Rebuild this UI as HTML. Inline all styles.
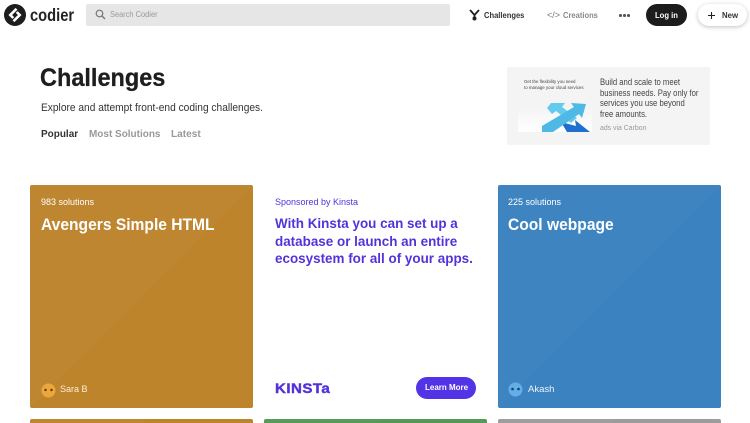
<!DOCTYPE html>
<html lang="en"><head><meta charset="utf-8"><title>Codier</title>
<style>
html,body{margin:0;padding:0;width:750px;height:423px;overflow:hidden;background:#fff}
body{font-family:"Liberation Sans",sans-serif;color:#1c1c1c}
#w{position:relative;width:750px;height:423px;overflow:hidden;filter:blur(.35px)}
.t{position:absolute;white-space:nowrap;line-height:1;transform-origin:left top}
.card{position:absolute;border-radius:2px;overflow:hidden}
.card:after{content:"";position:absolute;inset:0;background:linear-gradient(135deg,rgba(255,255,255,.02) 0%,rgba(255,255,255,.02) 50%,rgba(0,0,0,0) 50%)}
.ct{color:#fff}
svg{position:absolute}
</style></head><body><div id="w">

<svg style="left:3.5px;top:4px" width="22" height="22" viewBox="0 0 22 22"><circle cx="11" cy="11" r="11" fill="#1d1d1d"/><path d="M12.5 4.8 L6.3 11 L9.3 14 M9.5 17.2 L15.7 11 L12.7 8" fill="none" stroke="#fff" stroke-width="2.6"/></svg>
<div class="t" style="left:30px;top:6.5px;font-size:17.5px;font-weight:700;color:#222;transform:scaleX(.84)">codier</div>

<div style="position:absolute;left:86px;top:4px;width:364px;height:22px;background:#e6e6e6;border-radius:2px"></div>
<svg style="left:95px;top:9px" width="11" height="11" viewBox="0 0 11 11"><circle cx="4.5" cy="4.5" r="3.3" fill="none" stroke="#777" stroke-width="1.2"/><path d="M7 7l3 3" stroke="#777" stroke-width="1.3"/></svg>
<div class="t" style="left:110px;top:11px;font-size:8px;color:#999;transform:scaleX(.93)">Search Codier</div>

<svg style="left:469px;top:9px" width="11" height="12" viewBox="0 0 11 12"><path d="M1 1 L5.5 6 L10 1" fill="none" stroke="#222" stroke-width="1.8"/><path d="M5.5 5v3" stroke="#222" stroke-width="1.8"/><circle cx="5.5" cy="9.5" r="2" fill="#222"/></svg>
<div class="t" style="left:484px;top:11px;font-size:8.5px;font-weight:700;color:#333;transform:scaleX(.89)">Challenges</div>
<div class="t" style="left:547px;top:11px;font-size:9px;color:#777">&lt;/&gt;</div>
<div class="t" style="left:563px;top:11px;font-size:8.5px;font-weight:700;color:#888;transform:scaleX(.89)">Creations</div>
<div style="position:absolute;left:619px;top:14px;width:2.5px;height:2.5px;border-radius:50%;background:#555;box-shadow:4px 0 #555,8px 0 #555"></div>
<div style="position:absolute;left:646px;top:4px;width:41px;height:22px;border-radius:11px;background:#1c1c1c"></div>
<div class="t" style="left:655px;top:10.5px;font-size:8.5px;font-weight:700;color:#fff;transform:scaleX(.9)">Log in</div>
<div style="position:absolute;left:698px;top:4px;width:49px;height:22px;border-radius:11px;background:#fff;box-shadow:0 1px 4px rgba(0,0,0,.25)"></div>
<svg style="left:707px;top:11px" width="9" height="9" viewBox="0 0 9 9"><path d="M4.5 1v7M1 4.5h7" stroke="#222" stroke-width="1.1"/></svg>
<div class="t" style="left:722px;top:10.5px;font-size:8.5px;font-weight:700;color:#333;transform:scaleX(.92)">New</div>

<div class="t" style="left:40px;top:66px;font-size:25px;font-weight:700;color:#1e1e1e;-webkit-text-stroke:.3px #1e1e1e;transform:scaleX(.94)">Challenges</div>
<div class="t" style="left:41px;top:102.5px;font-size:11px;color:#333;transform:scaleX(.926)">Explore and attempt front-end coding challenges.</div>
<div class="t" style="left:41px;top:128.5px;font-size:10.5px;font-weight:700;color:#333;transform:scaleX(.95)">Popular</div>
<div class="t" style="left:89px;top:128.5px;font-size:10.5px;font-weight:700;color:#999;transform:scaleX(.95)">Most Solutions</div>
<div class="t" style="left:171px;top:128.5px;font-size:10.5px;font-weight:700;color:#999;transform:scaleX(.96)">Latest</div>

<div style="position:absolute;left:507px;top:67px;width:203px;height:78px;background:#f4f4f4;border-radius:2px"></div>
<div style="position:absolute;left:518px;top:75px;width:74px;height:57px;background:linear-gradient(180deg,#f4f4f4 55%,#fff)"></div>
<div class="t" style="left:524px;top:79px;font-size:4.4px;line-height:6px;color:#444">Get the flexibility you need<br>to manage your cloud services</div>
<svg style="left:541px;top:100px" width="50" height="33" viewBox="0 0 50 33"><path d="M20 22 L35 26 L34 20 L49 32 H26 Z" fill="#1f6fd0"/><path d="M6 8 L10 3 L24 3 L21 7 L36 18 L30 23 L15 11 L11 14 Z" fill="#63cbee"/><path d="M1 32 H12 L38 14 L41 18 L45 4 L30 3 L33 7 L1 26 Z" fill="#4db9e4"/></svg>
<div class="t" style="left:600px;top:77px;font-size:8.8px;line-height:10.7px;color:#444;transform:scaleX(.875)">Build and scale to meet<br>business needs. Pay only for<br>services you use beyond<br>free amounts.</div>
<div class="t" style="left:600px;top:124px;font-size:7.5px;color:#999;transform:scaleX(.92)">ads via Carbon</div>

<div class="card" style="left:30px;top:185px;width:223px;height:223px;background:#bd842c"></div>
<div class="t ct" style="left:41px;top:198px;font-size:9px">983 solutions</div>
<div class="t ct" style="left:41px;top:217px;font-size:16.5px;font-weight:700;transform:scaleX(.945)">Avengers Simple HTML</div>
<svg style="left:41px;top:383px" width="15" height="15" viewBox="0 0 15 15"><circle cx="7.5" cy="7.5" r="7" fill="#eda63c"/><circle cx="4.5" cy="7" r="1.2" fill="#53391a"/><circle cx="10.5" cy="7" r="1.2" fill="#53391a"/></svg>
<div class="t" style="left:60px;top:385px;font-size:9px;color:#fbeed8">Sara B</div>

<div class="t" style="left:275px;top:198px;font-size:9px;color:#5333d9">Sponsored by Kinsta</div>
<div class="t" style="left:275px;top:216px;font-size:14.2px;line-height:17.5px;font-weight:700;color:#5333d9;transform:scaleX(.947)">With Kinsta you can set up a<br>database or launch an entire<br>ecosystem for all of your apps.</div>
<div class="t" style="left:275px;top:381px;font-size:14px;font-weight:700;color:#5333d9;-webkit-text-stroke:.4px #5333d9;letter-spacing:.4px;transform:scaleX(1.08)">KINSTa</div>
<div style="position:absolute;left:416px;top:377px;width:60px;height:22px;border-radius:11px;background:#5333e6"></div>
<div class="t" style="left:425px;top:384px;font-size:8px;font-weight:700;color:#fff">Learn More</div>

<div class="card" style="left:498px;top:185px;width:223px;height:223px;background:#3a82c0"></div>
<div class="t ct" style="left:508px;top:198px;font-size:9px">225 solutions</div>
<div class="t ct" style="left:508px;top:217px;font-size:16.5px;font-weight:700;transform:scaleX(.945)">Cool webpage</div>
<svg style="left:508px;top:382px" width="15" height="15" viewBox="0 0 15 15"><circle cx="7.5" cy="7.5" r="7" fill="#62aee8"/><circle cx="4.5" cy="7" r="1.3" fill="#1e3d5c"/><circle cx="10.5" cy="7" r="1.3" fill="#1e3d5c"/></svg>
<div class="t" style="left:528px;top:385px;font-size:9.5px;color:#eef5fb">Akash</div>

<div class="card" style="left:30px;top:419px;width:223px;height:10px;background:#bd842c"></div>
<div class="card" style="left:264px;top:419px;width:223px;height:10px;background:#529a55"></div>
<div class="card" style="left:498px;top:419px;width:223px;height:10px;background:#9c9c9c"></div>
</div></body></html>
